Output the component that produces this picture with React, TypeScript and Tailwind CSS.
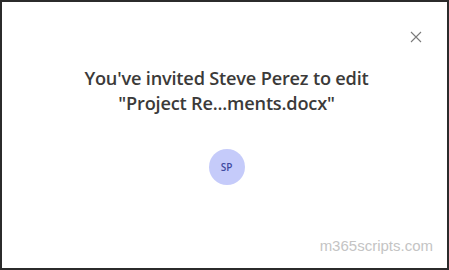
import React from 'react';

export default function App() {
  return (
    <div className="w-[449px] h-[270px] bg-white border-2 border-[#2b2b2b] relative flex flex-col items-center pl-[4px] font-['Open_Sans',sans-serif]">
      <button className="absolute top-[29px] right-[25px] w-3 h-3 flex items-center justify-center text-[#7a7a7a]">
        <svg width="12" height="12" viewBox="0 0 12 12" fill="none" stroke="currentColor" strokeWidth="1.1">
          <path d="M1 1L11 11M11 1L1 11" />
        </svg>
      </button>
      <h1 className="mt-[64px] text-center text-[18.2px] leading-[25px] font-semibold text-[#3b3a39] tracking-[-0.2px]">
        You've invited Steve Perez to edit
        <br />
        "Project Re...ments.docx"
      </h1>
      <div className="mt-[33px] w-[36px] h-[36px] rounded-full bg-[#c5cbfa] flex items-center justify-center">
        <span className="text-[10px] font-semibold text-[#3f4aa0]">SP</span>
      </div>
      <div className="absolute right-[14px] bottom-[11px] text-[15px] text-[#c4c4c4] font-['Liberation_Sans',sans-serif]">
        m365scripts.com
      </div>
    </div>
  );
}
